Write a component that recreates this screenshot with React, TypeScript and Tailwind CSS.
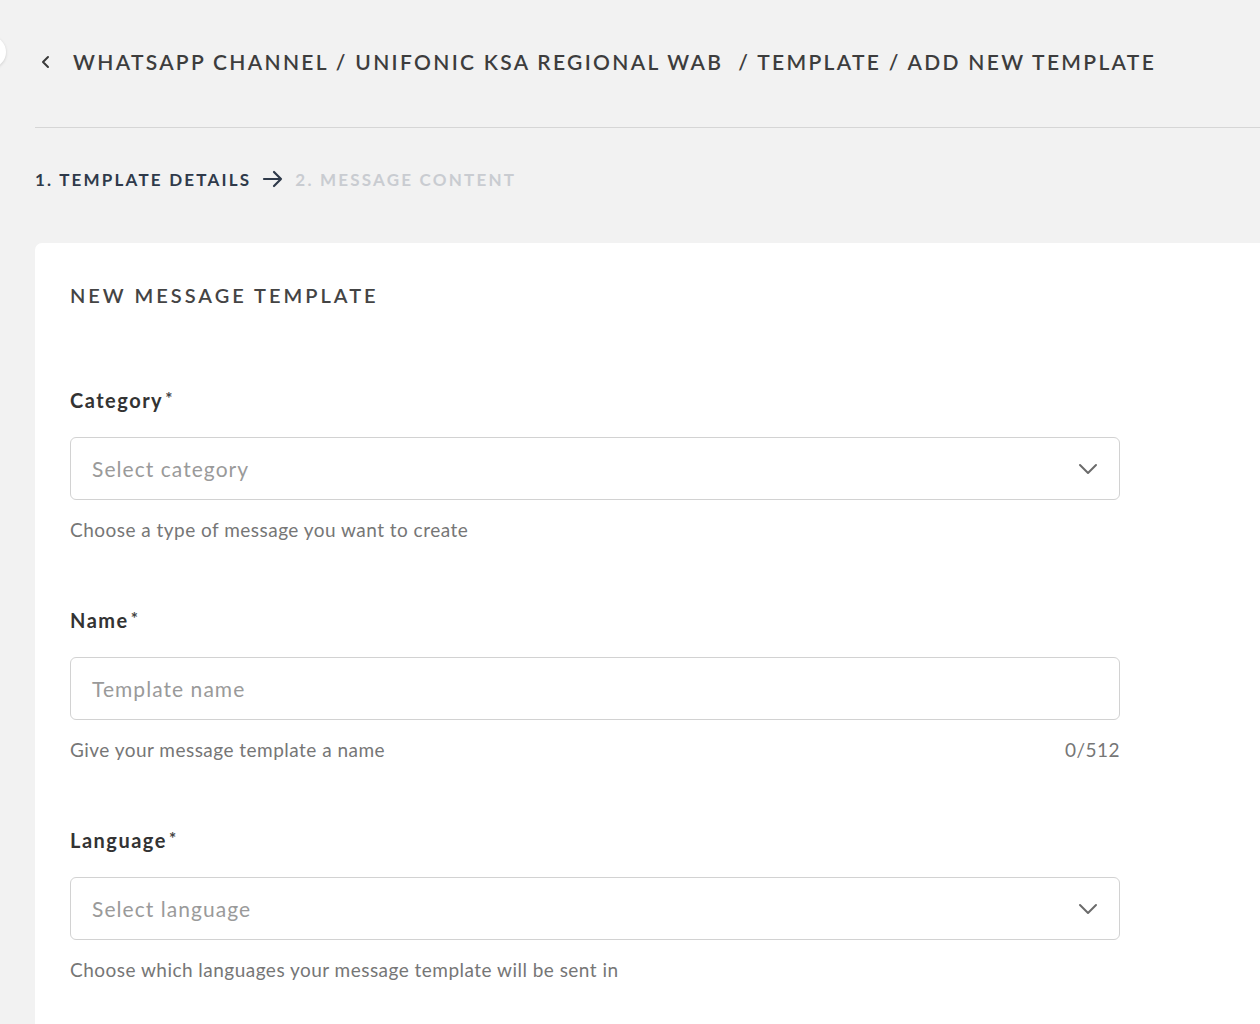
import React from "react";

const font = { fontFamily: "Lato, 'Noto Sans', sans-serif" };

function Chevron() {
  return (
    <svg width="20" height="12" viewBox="0 0 20 12" fill="none" stroke="#6b6b6b" strokeWidth="2" strokeLinecap="round" strokeLinejoin="round">
      <path d="M2 2l8 8 8-8" />
    </svg>
  );
}

function Label({ text }: { text: string }) {
  return (
    <div className="flex items-start text-[20px] font-bold text-[#333333] leading-none tracking-[0.075em]">
      <span>{text}</span>
      <span className="ml-[2px] text-[17px] font-bold text-[#444444] tracking-normal">*</span>
    </div>
  );
}

function Field({
  label,
  placeholder,
  helper,
  select,
  counter,
}: {
  label: string;
  placeholder: string;
  helper: string;
  select?: boolean;
  counter?: string;
}) {
  return (
    <div className="flex flex-col">
      <Label text={label} />
      <div className="mt-[27px] h-[63px] w-[1050px] rounded-[6px] border border-[#d2d2d2] flex items-center justify-between pl-[21px] pr-[21px]">
        <span className="text-[21px] text-[#9a9a9a] tracking-[0.05em]">{placeholder}</span>
        {select && <Chevron />}
      </div>
      <div className="mt-[20px] w-[1050px] flex justify-between text-[19px] text-[#767676] tracking-[0.025em] leading-none">
        <span>{helper}</span>
        {counter && <span>{counter}</span>}
      </div>
    </div>
  );
}

export default function App() {
  return (
    <div className="min-h-[1024px] w-[1260px] bg-[#f2f2f2] overflow-hidden relative" style={font}>
      <div className="absolute left-[-26px] top-[36px] h-[32px] w-[32px] rounded-full bg-white shadow-[0_1px_3px_rgba(0,0,0,0.15)]" />
      <div className="pl-[35px]">
        <div className="h-[128px] border-b border-[#d6d6d6] flex items-center pb-[4px]">
          <div className="flex items-center pl-[5px]">
            <svg width="12" height="14" viewBox="0 0 12 14" fill="none" stroke="#3a3a3a" strokeWidth="2" strokeLinecap="round" strokeLinejoin="round">
              <path d="M8 2L3 7l5 5" />
            </svg>
            <span className="ml-[21px] text-[21px] font-semibold text-[#3d3d3d] tracking-[0.11em] whitespace-pre">
              {"WHATSAPP CHANNEL / UNIFONIC KSA REGIONAL WAB  / TEMPLATE / ADD NEW TEMPLATE"}
            </span>
          </div>
        </div>
        <div className="h-[115px] flex items-start pt-[39px]">
          <span className="text-[17px] font-bold text-[#2f3a4a] tracking-[0.13em]">1. TEMPLATE DETAILS</span>
          <svg className="ml-[11px] mt-[2px]" width="22" height="20" viewBox="0 0 22 20" fill="none" stroke="#2f3a4a" strokeWidth="2.2" strokeLinecap="round" strokeLinejoin="round">
            <path d="M2 10h17M12 3l7 7-7 7" />
          </svg>
          <span className="ml-[11px] text-[17px] font-bold text-[#c9ccd1] tracking-[0.13em]">2. MESSAGE CONTENT</span>
        </div>
        <div className="bg-white rounded-l-[7px] pl-[35px] pt-[37px] pb-[60px] min-h-[800px]">
          <div className="text-[20px] font-semibold text-[#444444] tracking-[0.15em]">NEW MESSAGE TEMPLATE</div>
          <div className="mt-[80px] flex flex-col gap-[71px]">
            <Field label="Category" placeholder="Select category" helper="Choose a type of message you want to create" select />
            <Field label="Name" placeholder="Template name" helper="Give your message template a name" counter="0/512" />
            <Field label="Language" placeholder="Select language" helper="Choose which languages your message template will be sent in" select />
          </div>
        </div>
      </div>
    </div>
  );
}
